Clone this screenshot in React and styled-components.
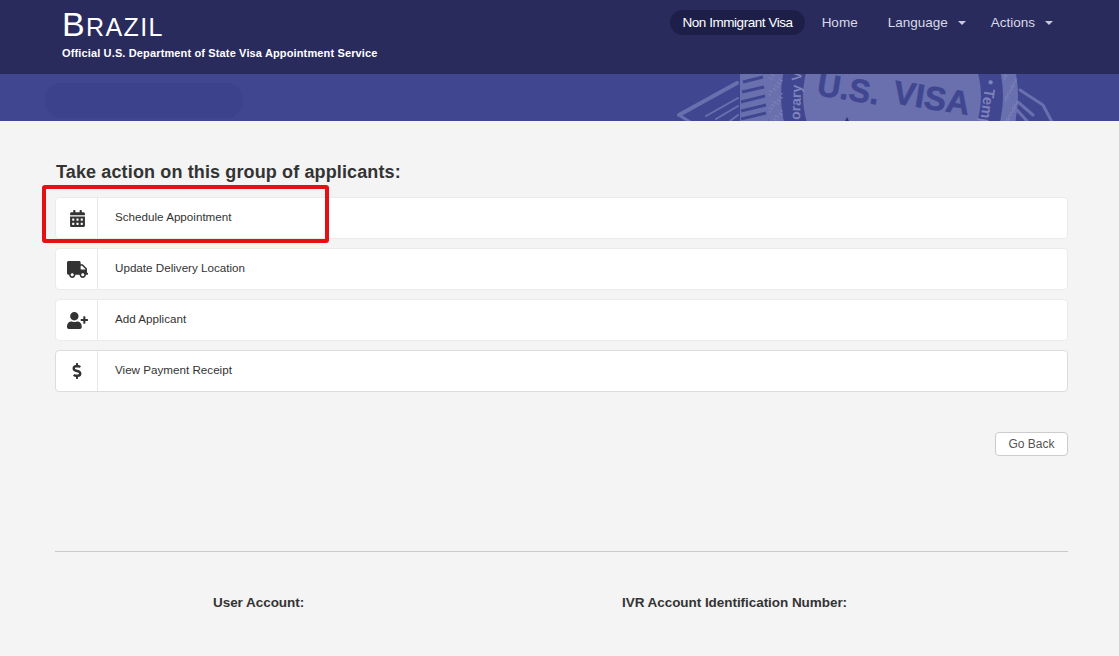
import styled, { createGlobalStyle } from "styled-components";
import { FaCalendarAlt, FaTruck, FaUserPlus, FaDollarSign } from "react-icons/fa";

const GlobalStyle = createGlobalStyle`
  body {
    margin: 0;
    background: #f4f4f4;
    font-family: "Liberation Sans", Arial, sans-serif;
    color: #333;
  }
`;

const Header = styled.header`
  height: 74px;
  background: #2a2b5d;
  display: flex;
  justify-content: space-between;
  padding: 0 66px 0 62px;
`;

const Brand = styled.div`
  color: #fff;
  padding-top: 5px;
`;

const BrandTitle = styled.div`
  font-size: 25px;
  line-height: 38px;
  text-transform: uppercase;
  letter-spacing: 1.4px;

  &::first-letter {
    font-size: 34px;
  }
`;

const BrandSub = styled.div`
  font-size: 11px;
  font-weight: bold;
  line-height: 16px;
  margin-top: -1px;
  letter-spacing: 0.14px;
`;

const Nav = styled.nav`
  display: flex;
  align-items: flex-start;
  padding-top: 10px;
`;

const NavPill = styled.a`
  height: 25px;
  padding: 0 12px;
  margin-right: 17px;
  border-radius: 13px;
  background: #1e1f48;
  color: #fff;
  font-size: 13.5px;
  line-height: 25px;
  letter-spacing: -0.45px;
`;

const NavLink = styled.a`
  display: flex;
  align-items: center;
  height: 25px;
  margin-right: ${(p) => p.$gap}px;
  color: #d9d9e6;
  font-size: 13.5px;
`;

const Caret = styled.span`
  width: 0;
  height: 0;
  margin-left: 10px;
  border-left: 4px solid transparent;
  border-right: 4px solid transparent;
  border-top: 4px solid #c8c8d8;
`;

const Banner = styled.div`
  height: 47px;
  box-sizing: border-box;
  background: #404690;
  display: flex;
  justify-content: space-between;
  overflow: hidden;
  padding: 9px 0 3px 45px;
`;

const BannerSmear = styled.div`
  width: 198px;
  border-radius: 17px;
  background: #3d428c;
`;

const Seal = styled.svg`
  width: 400px;
  height: 47px;
  margin: -9px 49px 0 0;
  flex-shrink: 0;
`;

const SealText = styled.text`
  font-family: "Liberation Sans", Arial, sans-serif;
  font-weight: bold;
`;

const Main = styled.main`
  padding: 40px 51px 0 55px;
`;

const Heading = styled.h2`
  margin: 0 0 14px 1px;
  font-size: 18px;
  line-height: 22px;
  font-weight: bold;
  letter-spacing: 0.13px;
  color: #333;
`;

const ActionList = styled.div`
  display: flex;
  flex-direction: column;
  gap: 9px;
`;

const ActionRow = styled.a`
  position: relative;
  display: flex;
  align-items: center;
  height: 42px;
  box-sizing: border-box;
  background: #fff;
  border: 1px solid ${(p) => (p.$dark ? "#dcdcdc" : "#ebebeb")};
  border-radius: 4px;
`;

const IconCell = styled.span`
  width: 42px;
  height: 100%;
  box-sizing: border-box;
  padding-left: 1px;
  flex-shrink: 0;
  display: flex;
  align-items: center;
  justify-content: center;
  border-right: 1px solid #e8e8e8;
  color: #333;
  font-size: ${(p) => p.$size}px;
`;

const ActionLabel = styled.span`
  padding: 0 0 4px 17px;
  font-size: 11.65px;
  color: #333;
`;

const Highlight = styled.span`
  position: absolute;
  left: -14px;
  top: -13px;
  width: 287px;
  height: 58px;
  box-sizing: border-box;
  border: 4px solid #e60f13;
  border-radius: 3px;
`;

const ButtonBar = styled.div`
  display: flex;
  justify-content: flex-end;
  margin-top: 40px;
`;

const GoBack = styled.button`
  width: 73px;
  height: 24px;
  padding: 0;
  background: #fff;
  border: 1px solid #ccc;
  border-radius: 4px;
  color: #555;
  font-family: inherit;
  font-size: 12px;
`;

const Divider = styled.hr`
  height: 1px;
  margin: 95px 0 0;
  border: 0;
  background: #c9c9c9;
`;

const AccountRow = styled.div`
  display: flex;
  padding: 43px 0 0 158px;
  font-size: 13.5px;
  line-height: 16px;
  font-weight: bold;
  color: #333;
  letter-spacing: -0.05px;
`;

const AccountField = styled.span`
  width: ${(p) => p.$width}px;
`;

const actions = [
  { label: "Schedule Appointment", icon: <FaCalendarAlt />, size: 17, marked: true },
  { label: "Update Delivery Location", icon: <FaTruck />, size: 21 },
  { label: "Add Applicant", icon: <FaUserPlus />, size: 21 },
  { label: "View Payment Receipt", icon: <FaDollarSign />, size: 16, dark: true },
];

// worn print grain around the ring of the seal
const grain = Array.from({ length: 70 }, (_, i) => ({
  x: i % 2 ? 98 + ((i * 37) % 14) : 334 + ((i * 23) % 13),
  y: (i * 29) % 47,
}));

const SEAL_LIGHT = "#6a70ae";
const SEAL_DARK = "#404690";

const App = () => {
  return (
    <>
      <GlobalStyle />
      <Header>
        <Brand>
          <BrandTitle>Brazil</BrandTitle>
          <BrandSub>Official U.S. Department of State Visa Appointment Service</BrandSub>
        </Brand>
        <Nav>
          <NavPill>Non Immigrant Visa</NavPill>
          <NavLink $gap={30}>Home</NavLink>
          <NavLink $gap={25}>
            Language
            <Caret />
          </NavLink>
          <NavLink $gap={0}>
            Actions
            <Caret />
          </NavLink>
        </Nav>
      </Header>
      <Banner>
        <BannerSmear />
        <Seal viewBox="0 0 400 47">
          {/* left wing */}
          <g stroke={SEAL_LIGHT} fill="none" strokeLinecap="round">
            <path d="M9 41 L67 9" strokeWidth="4" />
            <path d="M9 41 L20 48" strokeWidth="3" />
            <path d="M36 42 L68 24 M46 45 L68 32 M60 47 L68 41" strokeWidth="2" />
            {/* right wing */}
            <path d="M350 16 L373 31 L382 48" strokeWidth="3" />
            <path d="M348 28 L363 41 M347 36 L357 47" strokeWidth="3" />
          </g>
          <rect x="70" y="0" width="28" height="47" fill={SEAL_LIGHT} />
          <g stroke={SEAL_DARK} strokeWidth="3">
            <path d="M73 8 L93 3 M72 18 L94 13 M71 28 L95 22 M71 37 L96 31 M71 45 L96 39" />
          </g>
          {/* ring and inner disc */}
          <circle cx="222" cy="22" r="126" fill={SEAL_LIGHT} />
          <circle cx="222" cy="22" r="111" fill={SEAL_DARK} />
          <circle cx="222" cy="22" r="89" fill={SEAL_LIGHT} />
          <g fill="#7b80ba">
            {grain.map((dot) => (
              <rect key={`${dot.x}-${dot.y}`} x={dot.x} y={dot.y} width="1.5" height="1.5" />
            ))}
          </g>
          <SealText x="130" y="46" fontSize="14" fill="#7e83bc" transform="rotate(-88 130 46)">orary V</SealText>
          <SealText x="316" y="5" fontSize="15" fill="#7e83bc" transform="rotate(98 316 5)">• Temp</SealText>
          <SealText x="146" y="21" fontSize="32" fill={SEAL_DARK} stroke={SEAL_DARK} strokeWidth="0.6" transform="rotate(9 146 21)">U.S.</SealText>
          <SealText x="222" y="29" fontSize="33" fill={SEAL_DARK} stroke={SEAL_DARK} strokeWidth="0.6" transform="rotate(9 222 29)">VISA</SealText>
          <path d="M175 47 L177 43 L179 47 Z" fill="#2f3470" />
        </Seal>
      </Banner>
      <Main>
        <Heading>Take action on this group of applicants:</Heading>
        <ActionList>
          {actions.map((action) => (
            <ActionRow key={action.label} $dark={action.dark}>
              <IconCell $size={action.size}>{action.icon}</IconCell>
              <ActionLabel>{action.label}</ActionLabel>
              {action.marked && <Highlight />}
            </ActionRow>
          ))}
        </ActionList>
        <ButtonBar>
          <GoBack>Go Back</GoBack>
        </ButtonBar>
        <Divider />
        <AccountRow>
          <AccountField $width={409}>User Account:</AccountField>
          <AccountField>IVR Account Identification Number:</AccountField>
        </AccountRow>
      </Main>
    </>
  );
};

export default App;
